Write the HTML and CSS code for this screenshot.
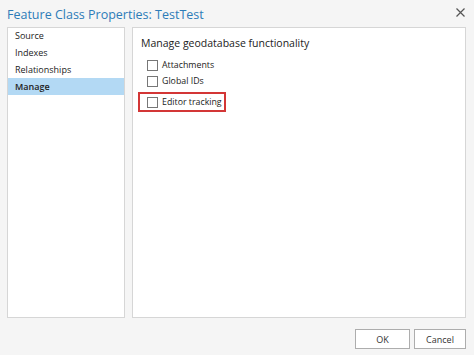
FILE: index.html
```html
<!DOCTYPE html>
<html>
<head>
<meta charset="utf-8">
<link rel="stylesheet" href="styles.css">
</head>
<body>
<div class="dialog">
  <div class="titlebar">
    <span class="title">Feature Class Properties: TestTest</span>
    <span class="close">
      <svg width="9" height="9" viewBox="0 0 9 9"><path d="M0.5 0.5 L8.5 8.5 M8.5 0.5 L0.5 8.5" stroke="#555" stroke-width="1.2"/></svg>
    </span>
  </div>
  <div class="main">
    <div class="nav">
      <div class="nav-item">Source</div>
      <div class="nav-item">Indexes</div>
      <div class="nav-item">Relationships</div>
      <div class="nav-item active">Manage</div>
    </div>
    <div class="content">
      <div class="heading">Manage geodatabase functionality</div>
      <div class="options">
        <label class="opt"><span class="box"></span>Attachments</label>
        <label class="opt"><span class="box"></span>Global IDs</label>
        <label class="opt highlight"><span class="box"></span>Editor tracking</label>
      </div>
    </div>
  </div>
  <div class="footer">
    <button class="btn">OK</button>
    <button class="btn">Cancel</button>
  </div>
</div>
</body>
</html>
```
FILE: styles.css
```css
html, body {
  margin: 0;
  padding: 0;
  background: #f5f5f5;
}
body {
  width: 474px;
  height: 355px;
  overflow: hidden;
  font-family: "Open Sans", "Noto Sans", sans-serif;
  color: #222;
}
.dialog {
  width: 474px;
  height: 355px;
  display: flex;
  flex-direction: column;
}
.titlebar {
  height: 27px;
  display: flex;
  align-items: center;
  justify-content: space-between;
  padding: 0 9px 0 7px;
  box-sizing: border-box;
}
.title {
  color: #2d7cb8;
  font-size: 12.5px;
  margin-top: 1px;
}
.close {
  display: flex;
  margin-top: -2px;
}
.main {
  display: flex;
  gap: 7px;
  padding: 0 8px 0 7px;
  height: 291px;
}
.nav {
  width: 118px;
  background: #fff;
  border: 1px solid #d6d6d6;
  box-sizing: border-box;
}
.nav-item {
  font-size: 9px;
  height: 17px;
  line-height: 17px;
  padding-left: 7px;
  color: #222;
  white-space: nowrap;
}
.nav-item:first-child {
  margin-top: -1px;
}
.nav-item.active {
  background: #b3d9f4;
  font-weight: 600;
}
.content {
  flex: 1;
  background: #fff;
  border: 1px solid #d6d6d6;
  box-sizing: border-box;
  padding: 7px 0 0 8px;
}
.heading {
  font-size: 10.5px;
  color: #222;
  height: 16px;
  line-height: 16px;
  white-space: nowrap;
}
.options {
  margin-top: 6px;
  display: flex;
  flex-direction: column;
  padding-left: 6px;
}
.opt {
  display: flex;
  align-items: center;
  font-size: 8.8px;
  height: 16px;
  gap: 4px;
  color: #222;
  white-space: nowrap;
}
.box {
  width: 9px;
  height: 9px;
  border: 1px solid #777;
  background: #fff;
  flex: none;
}
.opt.highlight {
  margin-top: 3px;
  margin-left: -9px;
  width: 88px;
  height: 20px;
  padding-left: 7px;
  border: 2px solid #d33636;
  box-sizing: border-box;
}
.footer {
  flex: 1;
  display: flex;
  justify-content: flex-end;
  align-items: flex-start;
  gap: 4px;
  padding: 11px 8px 0 0;
}
.btn {
  width: 55px;
  height: 20px;
  background: #fff;
  border: 1px solid #adadad;
  font-family: "Open Sans", "Noto Sans", sans-serif;
  font-size: 9px;
  color: #333;
  padding: 0;
}
.btn:last-child {
  width: 52px;
}
```
